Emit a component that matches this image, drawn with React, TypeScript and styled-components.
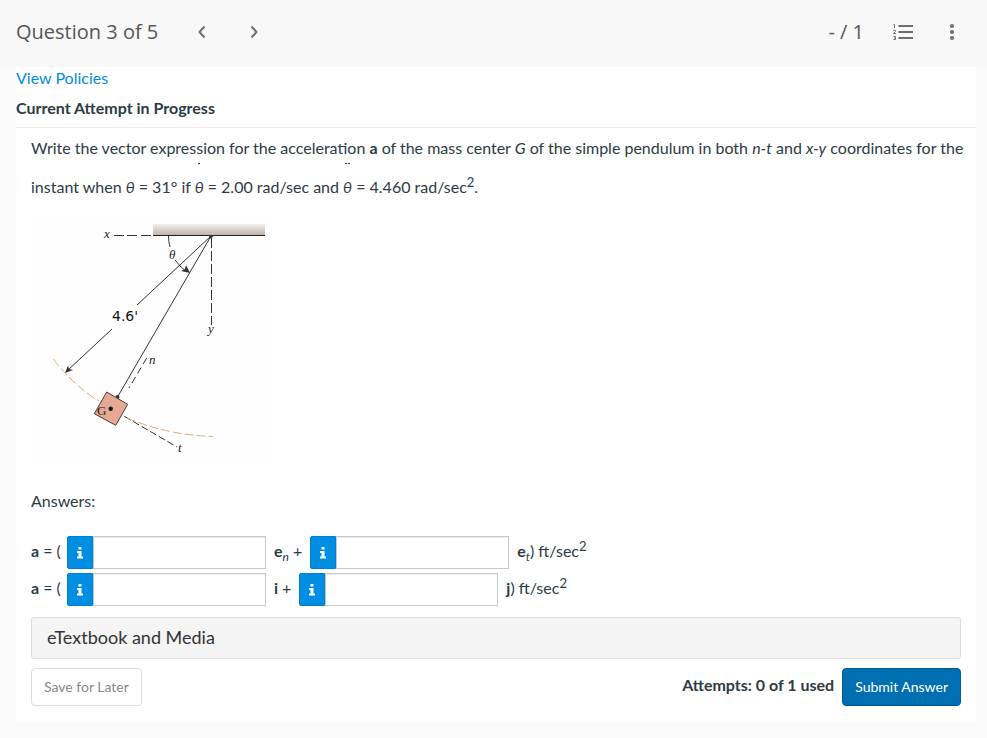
import React from 'react';
import styled, { createGlobalStyle } from 'styled-components';

const GlobalStyle = createGlobalStyle`
  *, *::before, *::after { box-sizing: border-box; }
  body {
    margin: 0;
    background: #fafafa;
    color: #2d3b45;
    font: 16px/24px Lato, "Liberation Sans", sans-serif;
  }
  button, input { font: inherit; }
`;

const Header = styled.header`
  display: flex;
  align-items: center;
  justify-content: space-between;
  height: 67px;
  padding: 0 15px 3px 16px;
  background: #f8f8f8;
  color: #555;
  font-family: "Open Sans", sans-serif;
  font-size: 20px;
  line-height: 28px;
`;

const HeaderGroup = styled.div<{ $gap: number }>`
  display: flex;
  align-items: center;
  gap: ${(p) => p.$gap}px;
`;

const Heading = styled.h1`
  margin: 0 12px 0 0;
  font: inherit;
`;

const Score = styled.span`
  margin-right: 10px;
`;

const IconButton = styled.button`
  display: flex;
  align-items: center;
  justify-content: center;
  width: 40px;
  height: 40px;
  padding: 0;
  border: 0;
  background: none;
  color: #6e6e6e;
  cursor: pointer;
`;

const Card = styled.main`
  margin: 0 11px 15px 16px;
  padding-bottom: 17px;
  background: #fff;
`;

const PolicyLink = styled.a`
  display: block;
  width: fit-content;
  line-height: 22px;
  color: #008ee2;
  text-decoration: none;
`;

const AttemptTitle = styled.h2`
  margin: 7px 0 0;
  padding-bottom: 7px;
  border-bottom: 1px solid #ececec;
  font-size: 16px;
  line-height: 24px;
  font-weight: 700;
`;

const Body = styled.div`
  padding: 0 15px;
`;

const Prompt = styled.p`
  margin: 0 -14px 0 0;
  line-height: 39px;
`;

const Sup = styled.sup`
  font-size: 13px;
  line-height: 0;
  vertical-align: 6px;
`;

const Sub = styled.sub`
  font-size: 12px;
  line-height: 0;
  font-style: italic;
  vertical-align: -4px;
`;

const Theta = styled.i`
  position: relative;
`;

const DotMark = styled.span<{ $double?: boolean }>`
  position: absolute;
  top: -14px;
  left: 0;
  right: 0;
  display: flex;
  justify-content: center;
  gap: 1px;

  &::before,
  &::after {
    content: '';
    width: 2px;
    height: 1px;
    background: #2d3b45;
  }

  &::after {
    display: ${(p) => (p.$double ? 'block' : 'none')};
  }
`;

const Figure = styled.svg`
  display: block;
  margin-top: 16px;
`;

const AnswersLabel = styled.p`
  margin: 25px 0 23px;
`;

const AnswerRow = styled.div`
  display: flex;
  align-items: center;
  height: 33px;
  margin-bottom: 4px;
  white-space: pre;
`;

const Term = styled.span`
  padding-bottom: 4px;
`;

const Field = styled.div<{ $before: number }>`
  display: flex;
  height: 33px;
  margin: 0 8px 0 ${(p) => p.$before}px;
`;

const InfoButton = styled.button`
  display: flex;
  align-items: center;
  justify-content: center;
  width: 26px;
  padding: 0;
  border: 1px solid #0081cf;
  border-radius: 2px 0 0 2px;
  background: #008ee2;
  color: #fff;
  cursor: pointer;
`;

const AnswerInput = styled.input`
  width: 173px;
  padding: 4px 8px;
  border: 1px solid #c8c8c8;
  border-radius: 0;
  background: #fff;
  box-shadow: inset 0 1px 1px rgba(0, 0, 0, 0.07);
  color: inherit;
`;

const MediaButton = styled.button`
  display: block;
  width: 100%;
  height: 42px;
  margin: 11px 0 9px;
  padding: 0 15px 2px;
  border: 1px solid #ddd;
  border-radius: 3px;
  background: #f4f4f4;
  color: #333;
  font-size: 18px;
  text-align: left;
  cursor: pointer;
`;

const Footer = styled.footer`
  display: flex;
  align-items: center;
  gap: 8px;
`;

const Attempts = styled.span`
  margin-left: auto;
  padding-bottom: 4px;
  font-weight: 700;
`;

const ActionButton = styled.button<{ $primary?: boolean }>`
  height: 38px;
  padding: 0 12px;
  border: 1px solid ${(p) => (p.$primary ? '#005c94' : '#ddd')};
  border-radius: 4px;
  background: ${(p) => (p.$primary ? '#006fb2' : '#fff')};
  color: ${(p) => (p.$primary ? '#fff' : '#888')};
  font-size: 14px;
  cursor: pointer;
`;

function Chevron({ direction }: { direction: 'left' | 'right' }) {
  return (
    <svg width="12" height="16" viewBox="0 0 12 16" fill="none" stroke="currentColor" strokeWidth="2" aria-hidden="true">
      <path d={direction === 'left' ? 'M8.5 2.5 3.5 8l5 5.5' : 'M3.5 2.5 8.5 8l-5 5.5'} />
    </svg>
  );
}

function NumberedListIcon() {
  return (
    <svg width="20" height="18" viewBox="0 0 20 18" fill="none" stroke="currentColor" aria-hidden="true">
      <path d="M5.5 3H20M5.5 9H20M5.5 15H20" strokeWidth="2" />
      <path d="M.5 1.5h1V5M.5 7.5h2v1L.5 10.5H3M.5 13.5h2v3h-2M1 15h1.5" />
    </svg>
  );
}

function MoreIcon() {
  return (
    <svg width="6" height="18" viewBox="0 0 6 18" fill="currentColor" aria-hidden="true">
      <circle cx="3" cy="3" r="2.1" />
      <circle cx="3" cy="9" r="2.1" />
      <circle cx="3" cy="15" r="2.1" />
    </svg>
  );
}

function Pendulum() {
  return (
    <Figure width="241" height="242" viewBox="1 0 241 242" role="img" aria-label="Simple pendulum diagram">
      <defs>
        <linearGradient id="ceiling" x1="0" y1="0" x2="0" y2="1">
          <stop offset="0" stopColor="#f2efec" />
          <stop offset="1" stopColor="#bdb5ad" />
        </linearGradient>
      </defs>
      <rect width="242" height="242" fill="#fefefe" />
      <rect x="123" y="2" width="112" height="11" fill="url(#ceiling)" />
      <path d="M123 13.5H235" stroke="#222" />
      <g fill="none" stroke="#333">
        <path d="M84 13.5H94M97 13.5H107M111 13.5H121" />
        <path d="M138.5 14Q138.5 20 140 25M145 38Q151 46 157 50" />
        <path d="M181 14 107 83M82 107 37 149M181 14 87.5 175" />
        <path d="M181.5 16V103" strokeDasharray="10 3" />
        <path d="M116.7 136 99 166" strokeDasharray="7 4" />
        <path d="M94.3 194.3 147 225" strokeDasharray="7 3" />
      </g>
      <g fill="#333">
        <path d="M160 51 151 49 155 47 156 43Z" />
        <path d="M35 151 38 143.5 39 147 43 148Z" />
        <path d="M178 13h6l-3 4z" />
        <circle cx="87.5" cy="175" r="2" />
      </g>
      <path
        d="M23.3 137Q45 165 69 179M97 196Q137 213 183 214.5"
        fill="none"
        stroke="#e2ad78"
        strokeDasharray="9 3"
      />
      <path d="M76.7 170 97.7 182.3 85.7 203.3 64.3 191.7Z" fill="#e7a994" stroke="#4a3a36" />
      <circle cx="80.7" cy="186.7" r="2.2" fill="#111" />
      <g fill="#222" fontFamily="Liberation Serif, serif" fontSize="13" fontStyle="italic">
        <text x="74" y="16">x</text>
        <text x="139" y="37">θ</text>
        <text x="178" y="111">y</text>
        <text x="119" y="142">n</text>
        <text x="148" y="230">t</text>
        <text x="67" y="193" fontStyle="normal">G</text>
      </g>
      <text x="82" y="99" fill="#111" fontFamily="DejaVu Sans, sans-serif" fontSize="14">
        4.6'
      </text>
    </Figure>
  );
}

function AnswerField({ label, before }: { label: string; before: number }) {
  return (
    <Field $before={before}>
      <InfoButton type="button" aria-label={`Information about ${label}`}>
        <svg width="8" height="12" viewBox="0 0 8 12" fill="currentColor" aria-hidden="true">
          <path d="M2.5 0h3v2.5h-3zM1 4h4.500v5.500H7v2H1v-2h1.500V6H1z" />
        </svg>
      </InfoButton>
      <AnswerInput type="text" aria-label={label} />
    </Field>
  );
}

export default function App() {
  return (
    <>
      <GlobalStyle />
      <Header>
        <HeaderGroup $gap={12}>
          <Heading>Question 3 of 5</Heading>
          <IconButton type="button" aria-label="Previous question">
            <Chevron direction="left" />
          </IconButton>
          <IconButton type="button" aria-label="Next question">
            <Chevron direction="right" />
          </IconButton>
        </HeaderGroup>
        <HeaderGroup $gap={9}>
          <Score>- / 1</Score>
          <IconButton type="button" aria-label="Question list">
            <NumberedListIcon />
          </IconButton>
          <IconButton type="button" aria-label="More options">
            <MoreIcon />
          </IconButton>
        </HeaderGroup>
      </Header>
      <Card>
        <PolicyLink href="#policies">View Policies</PolicyLink>
        <AttemptTitle>Current Attempt in Progress</AttemptTitle>
        <Body>
          <Prompt>
            Write the vector expression for the acceleration <b>a</b> of the mass center <i>G</i> of the simple
            pendulum in both <i>n-t</i> and <i>x-y</i> coordinates for the{' '}
            <span>
              instant when <Theta>θ</Theta> = 31° if{' '}
              <Theta>
                θ<DotMark />
              </Theta>{' '}
              = 2.00 rad/sec and{' '}
              <Theta>
                θ<DotMark $double />
              </Theta>{' '}
              = 4.460 rad/sec<Sup>2</Sup>.
            </span>
          </Prompt>
          <Pendulum />
          <AnswersLabel>Answers:</AnswersLabel>
          <AnswerRow>
            <Term><b>a</b> = (</Term>
            <AnswerField label="Normal component" before={6} />
            <Term><b>e</b><Sub>n</Sub> +</Term>
            <AnswerField label="Tangential component" before={8} />
            <Term><b>e</b><Sub>t</Sub>) ft/sec<Sup>2</Sup></Term>
          </AnswerRow>
          <AnswerRow>
            <Term><b>a</b> = (</Term>
            <AnswerField label="Horizontal component" before={6} />
            <Term><b>i</b> +</Term>
            <AnswerField label="Vertical component" before={8} />
            <Term><b>j</b>) ft/sec<Sup>2</Sup></Term>
          </AnswerRow>
          <MediaButton type="button">eTextbook and Media</MediaButton>
          <Footer>
            <ActionButton type="button">Save for Later</ActionButton>
            <Attempts>Attempts: 0 of 1 used</Attempts>
            <ActionButton type="button" $primary>Submit Answer</ActionButton>
          </Footer>
        </Body>
      </Card>
    </>
  );
}
